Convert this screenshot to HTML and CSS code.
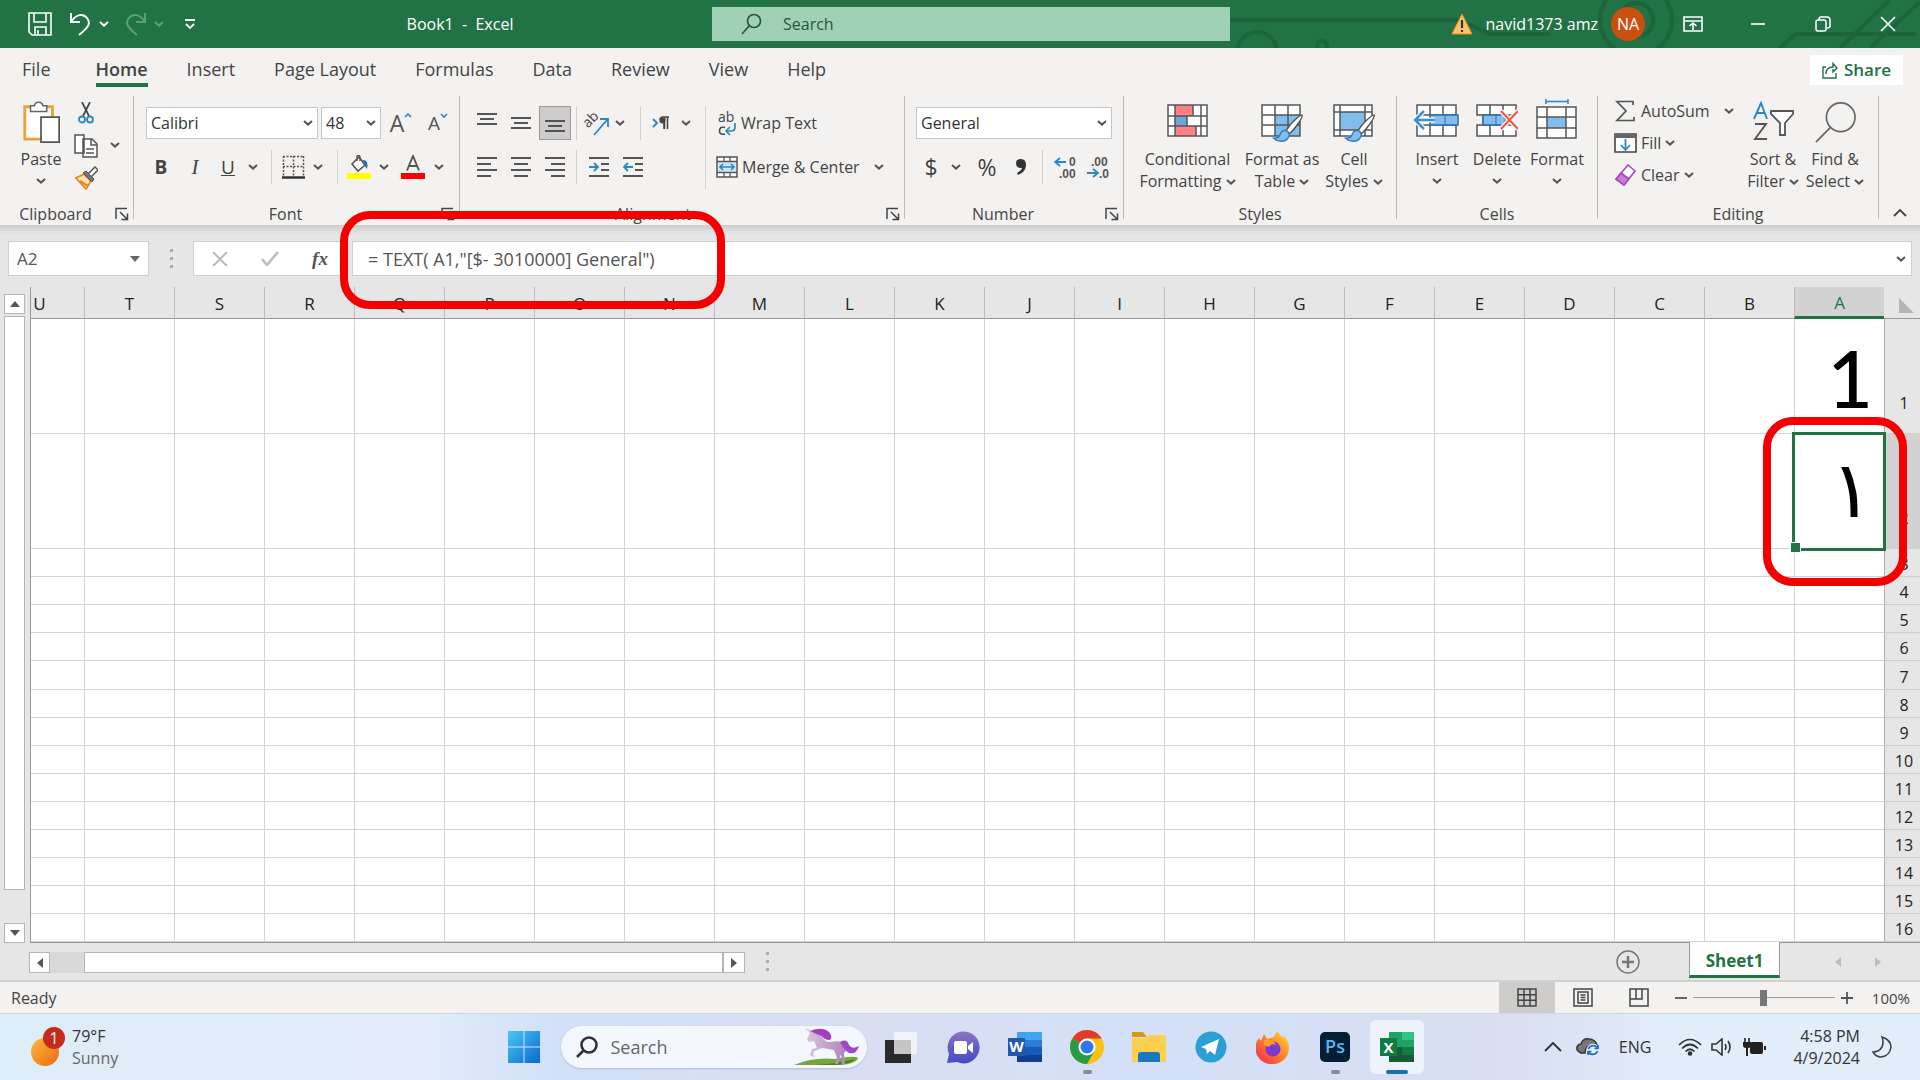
FILE: index.html
```html
<!DOCTYPE html>
<html lang="en">
<head>
<meta charset="utf-8">
<title>Book1 - Excel</title>
<link rel="stylesheet" href="styles.css">
</head>
<body>
<svg class="defs" aria-hidden="true">
  <symbol id="chev" viewBox="0 0 10 6"><path d="M1 1l4 3.6L9 1" fill="none" stroke="currentColor" stroke-width="2"/></symbol>
  <symbol id="launch" viewBox="0 0 14 14"><path d="M1 12V1.500H12M5 5l7 7M12.500 6.500V12.500H6.500" fill="none" stroke="currentColor" stroke-width="1.500"/></symbol>
  <symbol id="brush" viewBox="0 0 36 32"><path d="M35 1C33 0 22 10 17 18l4 4C27 16 36 4 35 1z" fill="#fff" stroke="#555" stroke-width="1.600"/><path d="M16 18c-6 0-5 6-8 8-2 1-3 1-5 1 4 4 12 5 16 0 3-4 1-8-3-9z" fill="#83bdec" stroke="#2a7fc6" stroke-width="1.500"/></symbol>
</svg>

<header class="titlebar">
  <svg class="circuit" viewBox="0 0 700 48" aria-hidden="true"><g fill="none" stroke="#1d653c" stroke-width="4"><path d="M10 20H240l30 14h60"/><circle cx="37" cy="52" r="20"/><circle cx="102" cy="46" r="5"/><circle cx="416" cy="20" r="36"/><circle cx="416" cy="20" r="17"/><path d="M560 48l16-14h120M620 48l50-48M650 48L700 2"/></g></svg>
  <nav class="quick" aria-label="Quick access">
    <button aria-label="Save"><svg width="26" height="26" viewBox="0 0 26 26" fill="none" stroke="#fff" stroke-width="1.600"><path d="M2 2h22v22H5l-3-3zM7 2v9h12V2M8 24v-8h11v8M11 24v-5"/></svg></button>
    <button aria-label="Undo"><svg width="22" height="24" viewBox="0 0 22 24" fill="none" stroke="#fff" stroke-width="2"><path d="M2 1v9h9M2 10C7 2 14 1 18 6s2 9-8 17"/></svg></button>
    <button aria-label="Undo list"><svg class="chev white"><use href="#chev"/></svg></button>
    <button aria-label="Redo" class="dim redo"><svg width="22" height="24" viewBox="0 0 22 24" fill="none" stroke="#fff" stroke-width="2"><path d="M20 1v9h-9M20 10C15 2 8 1 4 6s-2 9 8 17"/></svg></button>
    <button aria-label="Redo list" class="dim"><svg class="chev white"><use href="#chev"/></svg></button>
    <button aria-label="Customize"><svg width="12" height="11" viewBox="0 0 12 11" fill="none" stroke="#fff" stroke-width="1.800"><path d="M1 1h10M2 5l4 4 4-4"/></svg></button>
  </nav>
  <h1 class="doc">Book1&nbsp; -&nbsp; Excel</h1>
  <label class="tsearch"><svg width="21" height="22" viewBox="0 0 21 22" fill="none" stroke="#28563c" stroke-width="1.700"><circle cx="13" cy="8" r="6.500"/><path d="M8.500 12.500L1 21"/></svg><input type="text" aria-label="Search" placeholder="Search"></label>
  <div class="account">
    <svg width="22" height="22" viewBox="0 0 22 22"><path d="M11 1l10 20H1z" fill="#f9c56a" stroke="#e58f20"/><path d="M11 7v8M11 17v2" stroke="#333" stroke-width="2.200"/></svg>
    <span>navid1373 amz</span><span class="avatar">NA</span>
  </div>
  <div class="wincontrols">
    <button aria-label="Ribbon display"><svg width="20" height="16" viewBox="0 0 20 16" fill="none" stroke="#fff" stroke-width="1.600"><path d="M1 1h18v14H1zM1 5h18M10 14V7M6.500 10L10 7l3.500 3"/></svg></button>
    <button aria-label="Minimize"><svg width="16" height="16" viewBox="0 0 16 16"><path d="M1 8h14" stroke="#fff" stroke-width="1.600"/></svg></button>
    <button aria-label="Restore"><svg width="16" height="16" viewBox="0 0 16 16" fill="none" stroke="#fff" stroke-width="1.500"><rect x="1" y="4" width="10" height="11" rx="2"/><path d="M4 4V3q0-2 2-2h6q3 0 3 3v6q0 2-3 2"/></svg></button>
    <button aria-label="Close"><svg width="16" height="16" viewBox="0 0 16 16"><path d="M1 1l14 14M15 1L1 15" stroke="#fff" stroke-width="1.600"/></svg></button>
  </div>
</header>

<nav class="tabs">
  <a href="#" class="file">File</a><a href="#" class="on">Home</a><a href="#">Insert</a><a href="#">Page Layout</a><a href="#">Formulas</a><a href="#">Data</a><a href="#">Review</a><a href="#">View</a><a href="#">Help</a>
  <button class="share"><svg width="16" height="17" viewBox="0 0 16 17" fill="none" stroke="#217346" stroke-width="1.400"><path d="M4 5H1v11h13v-5M4 12c0-5 3-7 7-7V1.500L15 6l-4 4V7"/></svg>Share</button>
</nav>

<section class="ribbon">
  <div class="group">
    <div class="body clip">
      <button class="big"><svg width="40" height="44" viewBox="0 0 40 44"><path d="M3 6h29v34H3z" fill="#fff" stroke="#e8a33d" stroke-width="3"/><path d="M9 11V5h4c1-5 8-5 9 0h4v6z" fill="#fff" stroke="#666" stroke-width="1.600"/><path d="M20 17h19v26H20z" fill="#fff" stroke="#555" stroke-width="1.800"/></svg><span>Paste</span><svg class="chev"><use href="#chev"/></svg></button>
      <div class="stack">
        <button aria-label="Cut"><svg width="16" height="22" viewBox="0 0 16 22" fill="none"><path d="M4 0l7 14M12 0L5 14" stroke="#444" stroke-width="1.700"/><circle cx="4" cy="17.500" r="3" stroke="#2b87c8" stroke-width="1.800"/><circle cx="12" cy="17.500" r="3" stroke="#2b87c8" stroke-width="1.800"/></svg></button>
        <button aria-label="Copy"><svg width="24" height="24" viewBox="0 0 24 24" fill="#fff" stroke="#555" stroke-width="1.500"><path d="M1 1h9v18H1zM9 5h9l5 5v13H9z"/><path d="M17 5v6h6M12 15h8M12 19h8" fill="none"/></svg></button>
        <button aria-label="Format Painter"><svg width="24" height="24" viewBox="0 0 24 24"><path d="M14 8l7-7 3 3-7 7z" fill="#fff" stroke="#555" stroke-width="1.500"/><path d="M2 12l8-4 7 7-5 8z" fill="#fbe3bd" stroke="#e68a1e" stroke-width="1.800"/><path d="M9 7l9 9 2-3-8-8z" fill="#777" stroke="#555"/><path d="M6 15l8 5" stroke="#e68a1e" stroke-width="2.500"/></svg></button>
      </div>
      <button class="copymore" aria-label="Copy options"><svg class="chev"><use href="#chev"/></svg></button>
    </div>
    <div class="label">Clipboard<button aria-label="Clipboard settings"><svg><use href="#launch"/></svg></button></div>
  </div>

  <div class="group">
    <div class="body rows">
      <div class="r fontpick">
        <span class="combo"><select aria-label="Font"><option>Calibri</option></select><svg class="chev"><use href="#chev"/></svg></span>
        <span class="combo"><select aria-label="Font size"><option>48</option></select><svg class="chev"><use href="#chev"/></svg></span>
        <button class="grow">A<svg width="8" height="5" viewBox="0 0 8 5"><path d="M1 4l3-3 3 3" fill="none" stroke="#2b87c8" stroke-width="1.600"/></svg></button>
        <button class="grow small">A<svg width="8" height="5" viewBox="0 0 8 5"><path d="M1 1l3 3 3-3" fill="none" stroke="#2b87c8" stroke-width="1.600"/></svg></button>
      </div>
      <div class="r fontfmt">
        <button><b>B</b></button><button><i>I</i></button><button><u>U</u></button><button aria-label="Underline options"><svg class="chev"><use href="#chev"/></svg></button><hr>
        <button aria-label="Borders"><svg width="23" height="24" viewBox="0 0 23 24" stroke="#555" fill="none"><path d="M1.500 1v20M21.500 1v20M11.500 1v20M1 1.500h21M1 11.500h21" stroke-width="1.500" stroke-dasharray="2 1.500"/><path d="M0 22.500h23" stroke="#333" stroke-width="2.500"/></svg></button><button aria-label="Border options"><svg class="chev"><use href="#chev"/></svg></button><hr>
        <button aria-label="Fill color"><svg width="24" height="24" viewBox="0 0 24 24"><path d="M5 9l7-7 6 8-7 6z" fill="#fff" stroke="#555" stroke-width="1.600"/><path d="M10 6V1q2-2 3 1v4" fill="none" stroke="#555" stroke-width="1.400"/><path d="M16 5q6 0 4 9l-3-4z" fill="#2b6ea5"/><path d="M0 18h24v6H0z" fill="#ff0"/></svg></button><button aria-label="Fill options"><svg class="chev"><use href="#chev"/></svg></button>
        <button aria-label="Font color"><svg width="24" height="24" viewBox="0 0 24 24"><path d="M6 15.500L12 1l6 14.500M8 11h8" fill="none" stroke="#555" stroke-width="1.900"/><path d="M0 18h24v6H0z" fill="#f00"/></svg></button><button aria-label="Font color options"><svg class="chev"><use href="#chev"/></svg></button>
      </div>
    </div>
    <div class="label">Font<button aria-label="Font settings"><svg><use href="#launch"/></svg></button></div>
  </div>

  <div class="group">
    <div class="body align">
      <div class="rows">
        <div class="r al1">
          <button aria-label="Top align"><svg class="ln" viewBox="0 0 20 20"><path d="M0 1h20M3 6h14M0 11h20"/></svg></button><button aria-label="Middle align"><svg class="ln" viewBox="0 0 20 20"><path d="M0 5h20M3 10h14M0 15h20"/></svg></button><button class="pressed" aria-label="Bottom align"><svg class="ln" viewBox="0 0 20 20"><path d="M0 8h20M3 13h14M0 18h20"/></svg></button><hr>
          <button aria-label="Orientation"><svg class="orient" width="24" height="28" viewBox="0 0 24 28"><text class="glyph" x="2" y="19" transform="rotate(-45 3 18)">ab</text><path d="M9 26L22 11M15 10h8v8" fill="none" stroke="#2b87c8" stroke-width="1.800"/></svg></button><button aria-label="Orientation options"><svg class="chev"><use href="#chev"/></svg></button><hr>
          <button aria-label="Text direction"><svg width="18" height="14" viewBox="0 0 18 14"><path d="M1 3l4 4-4 4" fill="none" stroke="#2b87c8" stroke-width="2"/><path d="M17 1h-6q-3 0-3 3t4 3v6M12.500 1v12M15.500 1v12" fill="none" stroke="#444" stroke-width="1.500"/><circle cx="11" cy="4" r="2.500" fill="#444"/></svg></button><button aria-label="Direction options"><svg class="chev"><use href="#chev"/></svg></button>
        </div>
        <div class="r al2">
          <button aria-label="Align left"><svg class="ln" viewBox="0 0 20 20"><path d="M0 1h20M0 7h14M0 13h20M0 19h14"/></svg></button><button aria-label="Center"><svg class="ln" viewBox="0 0 20 20"><path d="M0 1h20M3 7h14M0 13h20M3 19h14"/></svg></button><button aria-label="Align right"><svg class="ln" viewBox="0 0 20 20"><path d="M0 1h20M6 7h14M0 13h20M6 19h14"/></svg></button><hr>
          <button aria-label="Increase indent"><svg class="ln" viewBox="0 0 20 20"><path d="M0 1h20M12 7h8M12 13h8M0 19h20"/><path class="bl" d="M0 10h9M5 6l4 4-4 4"/></svg></button><button aria-label="Decrease indent"><svg class="ln" viewBox="0 0 20 20"><path d="M0 1h20M12 7h8M12 13h8M0 19h20"/><path class="bl" d="M1 10h9M5 6l-4 4 4 4"/></svg></button>
        </div>
      </div>
      <div class="rows wrapcol">
        <button class="r txt"><svg width="20" height="28" viewBox="0 0 20 28"><text class="glyph" x="1" y="13">ab</text><path d="M8 18.500q-5-1.500-5.500 3t5.500 3.500" fill="none" stroke="#444" stroke-width="1.500"/><path d="M18 14v4q0 4-4 4H9M13 18l-4 4 4 4" fill="none" stroke="#2b87c8" stroke-width="1.700"/></svg>Wrap Text</button>
        <button class="r txt"><svg width="22" height="22" viewBox="0 0 22 22"><path d="M1 1h20v20H1z" fill="#fff" stroke="#555" stroke-width="1.500"/><path d="M2 6h18v10H2z" fill="#cde6f7"/><path d="M1 5.500h20M1 16.500h20M8 1v4M14 1v4M8 17v4M14 17v4" stroke="#555" stroke-width="1.300"/><path d="M4 11h14M7 8l-3 3 3 3M15 8l3 3-3 3" fill="none" stroke="#2b87c8" stroke-width="1.700"/></svg>Merge &amp; Center<svg class="chev"><use href="#chev"/></svg></button>
      </div>
    </div>
    <div class="label mid">Alignment<button aria-label="Alignment settings"><svg><use href="#launch"/></svg></button></div>
  </div>

  <div class="group">
    <div class="body rows">
      <div class="r numpick"><span class="combo"><select aria-label="Number format"><option>General</option></select><svg class="chev"><use href="#chev"/></svg></span></div>
      <div class="r numfmt">
        <button class="sym">$</button><button aria-label="Currency options"><svg class="chev"><use href="#chev"/></svg></button><button class="sym">%</button>
        <button aria-label="Comma style"><svg width="12" height="18" viewBox="0 0 12 18"><path d="M1 5q0-4 5-4 5 0 5 6 0 7-8 10l-1-2q5-3 5-5H6Q1 10 1 5z" fill="#333"/></svg></button><hr>
        <button aria-label="Increase decimal"><svg width="23" height="24" viewBox="0 0 23 24"><path d="M1 7h11M6 3L1 7l5 4" fill="none" stroke="#2b87c8" stroke-width="1.800"/><text class="dec" x="15" y="11">0</text><text class="dec" x="5" y="23">.00</text></svg></button><button aria-label="Decrease decimal"><svg width="23" height="24" viewBox="0 0 23 24"><path d="M0 18h11M6 14l5 4-5 4" fill="none" stroke="#2b87c8" stroke-width="1.800"/><text class="dec" x="4" y="11">.00</text><text class="dec" x="12" y="23">.0</text></svg></button>
      </div>
    </div>
    <div class="label">Number<button aria-label="Number settings"><svg><use href="#launch"/></svg></button></div>
  </div>

  <div class="group">
    <div class="body bigs styles">
      <button class="big"><svg width="42" height="40" viewBox="0 0 42 40"><path d="M1 3h39v31H1z" fill="#fff"/><path d="M8 3h18v11H8zM8 24h21v10H8z" fill="#ff8087"/><path d="M8 14h12v10H8z" fill="#6ba7dc"/><path d="M1 3h39v31H1zM1 14h39M1 24h39M8 3v31M26 3v11M20 14v10M29 24v10M34 3v31" fill="none" stroke="#555" stroke-width="1.500"/></svg><span>Conditional<br>Formatting <svg class="chev"><use href="#chev"/></svg></span></button>
      <button class="big"><svg width="42" height="40" viewBox="0 0 42 40"><path d="M1 3h38v31H1z" fill="#fff"/><path d="M14 13h25v21H14z" fill="#83bdec"/><path d="M1 3h38v31H1zM1 13h38M1 23h38M14 3v31M27 3v31" fill="none" stroke="#555" stroke-width="1.500"/><use href="#brush" x="10" y="12" width="32" height="29"/></svg><span>Format as<br>Table <svg class="chev"><use href="#chev"/></svg></span></button>
      <button class="big"><svg width="42" height="40" viewBox="0 0 42 40"><path d="M1 3h38v31H1z" fill="#fff"/><path d="M7 10h25v18H7z" fill="#83bdec"/><path d="M1 3h38v31H1zM1 10h38M1 28h38M7 3v31M32 3v31" fill="none" stroke="#555" stroke-width="1.500"/><use href="#brush" x="10" y="12" width="32" height="29"/></svg><span>Cell<br>Styles <svg class="chev"><use href="#chev"/></svg></span></button>
    </div>
    <div class="label">Styles</div>
  </div>

  <div class="group">
    <div class="body bigs cells">
      <button class="big"><svg width="46" height="40" viewBox="0 0 46 40"><path d="M3 3h39v31H3z" fill="#fff"/><path d="M3 3h39v31H3zM3 13h39M3 23h39M16 3v31M29 3v31" fill="none" stroke="#555" stroke-width="1.500"/><path d="M16 13h28v10H16z" fill="#83bdec" stroke="#2a6fb0" stroke-width="1.500"/><path d="M31 13v10" stroke="#2a6fb0"/><path d="M1 18h20M10 9l-9 9 9 9" fill="none" stroke="#fff" stroke-width="5"/><path d="M1 18h20M10 9l-9 9 9 9" fill="none" stroke="#3a8fd8" stroke-width="2.500"/></svg><span>Insert</span><svg class="chev"><use href="#chev"/></svg></button>
      <button class="big"><svg width="42" height="40" viewBox="0 0 42 40"><path d="M1 3h39v10H1zM1 23h39v11H1z" fill="#fff" stroke="#555" stroke-width="1.500"/><path d="M14 3v10M27 3v10M14 23v11M27 23v11M7 13v10" stroke="#555" stroke-width="1.500"/><path d="M7 13h20l3 5-3 5H7z" fill="#83bdec" stroke="#2a6fb0" stroke-width="1.500"/><path d="M20 13v10" stroke="#2a6fb0"/><path d="M25 9l17 18M42 9L25 27" stroke="#f3f2f1" stroke-width="5"/><path d="M25 9l17 18M42 9L25 27" stroke="#ef5350" stroke-width="2"/></svg><span>Delete</span><svg class="chev"><use href="#chev"/></svg></button>
      <button class="big"><svg width="42" height="46" viewBox="0 0 42 46"><path d="M1 9h39v31H1z" fill="#fff"/><path d="M11 19h19v11H11z" fill="#83bdec"/><path d="M1 9h39v31H1zM1 19h39M1 30h39M11 9v31M30 9v31" fill="none" stroke="#555" stroke-width="1.500"/><path d="M10 3.500h22M10 1v5M32 1v5" stroke="#2b87c8" stroke-width="1.500"/></svg><span>Format</span><svg class="chev"><use href="#chev"/></svg></button>
    </div>
    <div class="label">Cells</div>
  </div>

  <div class="group">
    <div class="body editing">
      <div class="elist">
        <button class="txt"><svg width="23" height="22" viewBox="0 0 23 22"><path d="M19 5V1.500H3L12 11 3 20.500h17V17" fill="none" stroke="#555" stroke-width="1.700"/></svg>AutoSum<svg class="chev far"><use href="#chev"/></svg></button>
        <button class="txt"><svg width="23" height="20" viewBox="0 0 23 20"><path d="M1 1h21v18H1z" fill="#fff" stroke="#444" stroke-width="1.600"/><path d="M1 3h21" stroke="#666" stroke-width="4"/><path d="M11.500 6v11M7 12l4.500 5 4.500-5" fill="none" stroke="#2b87c8" stroke-width="1.800"/></svg>Fill<svg class="chev"><use href="#chev"/></svg></button>
        <button class="txt"><svg width="23" height="22" viewBox="0 0 23 22"><path d="M14 1l7 6-11 14-8-6z" fill="#fff" stroke="#a24bbd" stroke-width="1.600"/><path d="M7 9l8 6-5 6-8-6z" fill="#c77ddb" stroke="#a24bbd" stroke-width="1.600"/></svg>Clear<svg class="chev"><use href="#chev"/></svg></button>
      </div>
      <button class="big"><svg width="42" height="40" viewBox="0 0 42 40" fill="none"><path d="M2 17L9 1l6 16M5 11h8" stroke="#2b87c8" stroke-width="1.900"/><path d="M3 22h11L3 37h12" stroke="#555" stroke-width="1.900"/><path d="M19 9h22v3l-8 9v12h-5V21l-9-9z" fill="#fff" stroke="#555" stroke-width="1.800"/></svg><span>Sort &amp;<br>Filter <svg class="chev"><use href="#chev"/></svg></span></button>
      <button class="big"><svg width="44" height="44" viewBox="0 0 44 44" fill="none" stroke="#666" stroke-width="1.800"><circle cx="28" cy="17" r="15"/><path d="M17 28L2 43"/></svg><span>Find &amp;<br>Select <svg class="chev"><use href="#chev"/></svg></span></button>
    </div>
    <div class="label">Editing</div>
  </div>
  <button class="collapse" aria-label="Collapse ribbon"><svg width="14" height="9" viewBox="0 0 14 9"><path d="M1 8l6-6 6 6" fill="none" stroke="#444" stroke-width="1.800"/></svg></button>
</section>

<section class="fbar">
  <label class="namebox"><input type="text" value="A2" aria-label="Name box"><svg width="10" height="6" viewBox="0 0 10 6"><path d="M0 0h10L5 6z" fill="#666"/></svg></label>
  <span class="dots"><i></i><i></i><i></i></span>
  <div class="fbtns">
    <button aria-label="Cancel"><svg width="16" height="14" viewBox="0 0 16 14"><path d="M1 0l14 14M15 0L1 14" stroke="#bbb" stroke-width="2"/></svg></button>
    <button aria-label="Enter"><svg width="18" height="15" viewBox="0 0 18 15"><path d="M1 8l5 6L17 1" fill="none" stroke="#bbb" stroke-width="2.500"/></svg></button>
    <button class="fx"><i>fx</i></button>
  </div>
  <label class="formula"><input type="text" aria-label="Formula" value="= TEXT( A1,&quot;[$- 3010000] General&quot;)"><svg class="chev"><use href="#chev"/></svg></label>
</section>

<main class="sheet">
  <div class="vscroll">
    <button aria-label="Scroll up"><svg width="10" height="6" viewBox="0 0 10 6"><path d="M0 6h10L5 0z" fill="#555"/></svg></button>
    <div class="thumb"></div>
    <button aria-label="Scroll down"><svg width="10" height="6" viewBox="0 0 10 6"><path d="M0 0h10L5 6z" fill="#555"/></svg></button>
  </div>
  <div class="gridwrap" dir="rtl"><table id="grid"></table></div>
</main>

<footer class="sheetbar">
  <div class="hscroll">
    <button aria-label="Scroll left"><svg width="6" height="10" viewBox="0 0 6 10"><path d="M6 0v10L0 5z" fill="#555"/></svg></button>
    <div class="thumb"></div>
    <button aria-label="Scroll right"><svg width="6" height="10" viewBox="0 0 6 10"><path d="M0 0v10l6-5z" fill="#555"/></svg></button>
  </div>
  <span class="dots"><i></i><i></i><i></i></span>
  <button class="add" aria-label="New sheet"><svg width="24" height="24" viewBox="0 0 24 24" fill="none" stroke="#777"><circle cx="12" cy="12" r="11" stroke-width="1.500"/><path d="M12 6v12M6 12h12" stroke-width="2.500"/></svg></button>
  <a class="stab" href="#">Sheet1</a>
  <div class="snav"><svg width="6" height="10" viewBox="0 0 6 10"><path d="M6 0v10L0 5z"/></svg><svg width="6" height="10" viewBox="0 0 6 10"><path d="M0 0v10l6-5z"/></svg></div>
</footer>

<div class="status">
  <span>Ready</span>
  <div class="views">
    <button class="pressed" aria-label="Normal"><svg width="20" height="19" viewBox="0 0 20 19"><path d="M1 1h18v17H1zM1 6.700h18M1 12.300h18M7 1v17M13 1v17"/></svg></button>
    <button aria-label="Page layout"><svg width="20" height="19" viewBox="0 0 20 19"><path d="M1 1h18v17H1zM5 4h10v11H5zM7.500 7h5M7.500 9.500h5M7.500 12h5"/></svg></button>
    <button aria-label="Page break"><svg width="20" height="19" viewBox="0 0 20 19"><path d="M1 1h18v17H1zM1 11h12V1M7 1v10"/></svg></button>
  </div>
  <div class="zoom">
    <button aria-label="Zoom out"><svg width="12" height="12" viewBox="0 0 12 12"><path d="M0 6h12"/></svg></button>
    <input type="range" aria-label="Zoom" min="0" max="100" value="50">
    <button aria-label="Zoom in"><svg width="12" height="12" viewBox="0 0 12 12"><path d="M0 6h12M6 0v12"/></svg></button>
    <span>100%</span>
  </div>
</div>

<div class="taskbar">
  <div class="weather">
    <svg width="36" height="42" viewBox="0 0 36 42"><defs><linearGradient id="sun" x1="0" y1="0" x2="1" y2="1"><stop offset="0" stop-color="#fdb73e"/><stop offset="1" stop-color="#ee6a10"/></linearGradient></defs><circle cx="16" cy="26" r="14" fill="url(#sun)"/><circle cx="25" cy="12" r="11" fill="#c42b1c"/><text x="25" y="18" class="badge">1</text></svg>
    <p>79°F<br><span>Sunny</span></p>
  </div>
  <div class="apps">
    <button aria-label="Start"><svg width="34" height="34" viewBox="0 0 34 34"><defs><linearGradient id="win" x1="0" y1="0" x2="1" y2="1"><stop offset="0" stop-color="#4cc8f5"/><stop offset="1" stop-color="#0868cc"/></linearGradient></defs><path d="M1 1h15.500v15.500H1zM17.500 1H33v15.500H17.500zM1 17.500h15.500V33H1zM17.500 17.500H33V33H17.500z" fill="url(#win)"/></svg></button>
    <label class="wsearch"><svg width="22" height="22" viewBox="0 0 22 22" fill="none" stroke="#333" stroke-width="2.600"><circle cx="13" cy="9" r="7.500"/><path d="M8 14l-7 7"/></svg><input type="text" aria-label="Search Windows" placeholder="Search">
      <svg class="unicorn" width="70" height="40" viewBox="0 0 70 40"><defs><linearGradient id="uni" x1="0" y1="0" x2="1" y2="0"><stop offset="0" stop-color="#dcc3dc"/><stop offset="1" stop-color="#b184bb"/></linearGradient></defs><path d="M1 38q20-8 40-6 22-4 24-1-2 8-30 7z" fill="#75a83a"/><path d="M20 38q24-1 42-6-5 6-27 6z" fill="#4f7b28"/><path d="M12 1l5 5-3 6 2 3 5-1 3 7-5 1-2 6 4 2 1-1-2-1 1-4 8-3 12 2 3 8-2 6h3l3-10 1 10h3l-1-11q4-3 2-9-6-4-16-2-6 0-8-6-4-5-10-5z" fill="url(#uni)"/><path d="M17 4q12-5 19 1 4 5 1 8-6 0-8-4-6-2-12-5z" fill="#a43fc4"/><path d="M47 15q7-4 9 3 3 5 10 1-3 9-10 7-5-3-9-11z" fill="#a04ac2"/></svg></label>
    <button aria-label="Task view"><svg width="34" height="34" viewBox="0 0 34 34"><path d="M1 10h26v23H1z" fill="#2a2a2a"/><path d="M10 2h23v22H10z" fill="#fafafa" opacity=".75"/></svg></button>
    <button aria-label="Chat"><svg width="34" height="34" viewBox="0 0 34 34"><defs><linearGradient id="chat" x1="0" y1="0" x2="0" y2="1"><stop offset="0" stop-color="#8a76c0"/><stop offset="1" stop-color="#4548c8"/></linearGradient></defs><path d="M1 33l2-9A16 16 0 1 1 11 32z" fill="url(#chat)"/><rect x="8" y="11" width="13" height="13" rx="2" fill="#fff"/><path d="M22 16l5-4v11l-5-4z" fill="#fff"/></svg></button>
    <button aria-label="Word"><svg width="34" height="32" viewBox="0 0 34 32"><path d="M9 1h25v8H9z" fill="#41a5ee"/><path d="M9 9h25v7H9z" fill="#2b7cd3"/><path d="M9 16h25v8H9z" fill="#185abd"/><path d="M9 24h25v7H9z" fill="#103f91"/><path d="M0 7h17v18H0z" fill="#1d59ae"/><text x="8.500" y="21" class="app">W</text></svg></button>
    <button class="run" aria-label="Chrome"><svg width="34" height="34" viewBox="0 0 34 34"><circle cx="17" cy="17" r="17" fill="#fbc116"/><path d="M17 17L2.300 8.500A17 17 0 0 1 31.700 8.500H17z" fill="#df3b2f"/><path d="M17 17L2.300 8.500A17 17 0 0 0 17 34l7-12z" fill="#2a9a46"/><circle cx="17" cy="17" r="8.500" fill="#fff"/><circle cx="17" cy="17" r="6.500" fill="#2f77e8"/></svg></button>
    <button aria-label="Files"><svg width="36" height="32" viewBox="0 0 36 32"><path d="M1 1h11l4 5H1z" fill="#d99a10"/><path d="M1 7h14l3-3h17v27H1z" fill="#fbd04f"/><path d="M7 31v-7q0-3 3-3h16q3 0 3 3v7z" fill="#1977c4"/></svg></button>
    <button aria-label="Telegram"><svg width="32" height="32" viewBox="0 0 32 32"><circle cx="16" cy="16" r="15.500" fill="#2d9fd5"/><path d="M6 16l18-8-4 16-5-4-3 3-1-5z" fill="#fff"/></svg></button>
    <button aria-label="Firefox"><svg width="34" height="34" viewBox="0 0 34 34"><defs><linearGradient id="ff" x1="1" y1="0" x2="0" y2="1"><stop offset="0" stop-color="#ffe43a"/><stop offset=".5" stop-color="#ff7a2a"/><stop offset="1" stop-color="#ee2558"/></linearGradient></defs><path d="M17 34A16 16 0 0 1 3 8l2 3 3-7 3 5 7-2 3-6q3 4 6 7l1-2q5 5 5 12A16 16 0 0 1 17 34z" fill="url(#ff)"/><circle cx="17" cy="19" r="7.500" fill="#7a3ad0"/><path d="M8 10q8-3 12 5-5-2-7 2l-5-2z" fill="#ff9a25"/></svg></button>
    <button class="run" aria-label="Photoshop"><svg width="32" height="32" viewBox="0 0 32 32"><rect x="1" y="1" width="30" height="30" rx="5" fill="#041e36"/><text x="16" y="22" class="app ps">Ps</text></svg></button>
    <button class="run active" aria-label="Excel"><svg width="34" height="32" viewBox="0 0 34 32"><path d="M9 1h13v15H9z" fill="#21a366"/><path d="M22 1h12v8H22z" fill="#33c481"/><path d="M22 9h12v7H22z" fill="#21a366"/><path d="M9 16h25v15H9z" fill="#185c37"/><path d="M22 16h12v8H22z" fill="#107c41"/><path d="M0 7h17v18H0z" fill="#107c41"/><text x="8.500" y="22" class="app">X</text></svg></button>
  </div>
  <div class="tray">
    <svg class="more" width="18" height="10" viewBox="0 0 18 10"><path d="M1 9l8-8 8 8" fill="none" stroke="#333" stroke-width="1.900"/></svg>
    <svg width="24" height="20" viewBox="0 0 24 20"><path d="M5 16Q0 14 1 10q1-3 4-3 2-6 8-5 6 0 8 6-4-2-8 1-4 2-4 7z" fill="#777" stroke="#333" stroke-width="1.500"/><circle cx="17" cy="13" r="6.500" fill="#e6effa"/><path d="M12.500 12a5 5 0 0 1 9-1M21.500 14a5 5 0 0 1-9 1M22 8v3.500h-3.500M12 18v-3.500h3.500" fill="none" stroke="#1c6cc8" stroke-width="1.700"/></svg>
    <span class="lang">ENG</span>
    <svg width="24" height="18" viewBox="0 0 24 18" fill="none" stroke="#333" stroke-width="1.700"><path d="M1 7q11-11 22 0M4 10.500q8-8 16 0M7.500 13.500q4.500-4.500 9 0"/><circle cx="12" cy="15.500" r="1.500" fill="#333"/></svg>
    <svg width="22" height="18" viewBox="0 0 22 18" fill="none" stroke="#333" stroke-width="1.600"><path d="M1 6h4l6-5v16l-6-5H1zM14 6q2 3 0 6M17 3q4 6 0 12"/></svg>
    <svg width="24" height="18" viewBox="0 0 24 18"><path d="M3 0v4M7 0v4" stroke="#222" stroke-width="1.600"/><path d="M1 4h8v3q0 3-3 3v8H4v-8Q1 10 1 7z" fill="#222"/><rect x="8" y="4" width="13" height="12" rx="2" fill="#222"/><path d="M22 8h2v4h-2z" fill="#222"/></svg>
    <p class="clock">4:58 PM<br>4/9/2024</p>
    <svg class="moon" width="20" height="22" viewBox="0 0 20 22"><path d="M10 1q9 3 9 10-1 9-10 10-5 0-8-5 6 0 9-5 2-5 0-10z" fill="none" stroke="#444" stroke-width="1.600"/></svg>
  </div>
</div>

<div class="mark mark-formula"></div>
<div class="mark mark-cell"></div>
<script src="grid.js"></script>
</body>
</html>
```
FILE: styles.css
```css
* { box-sizing: border-box; }
body { margin: 0; min-height: 100vh; display: flex; flex-direction: column; position: relative; overflow-x: hidden; font: 16px/20px "Open Sans", "Noto Sans", sans-serif; color: #444; background: #e6e6e6; }
button, input, select { font: inherit; color: inherit; border: 0; background: none; padding: 0; margin: 0; outline: 0; }
button { display: flex; align-items: center; justify-content: center; }
a { color: inherit; text-decoration: none; }
p { margin: 0; }
svg { flex: none; }
.defs { position: absolute; width: 0; height: 0; }
.chev { width: 10px; height: 6px; color: #555; }
.white { color: #fff; }
.dim { opacity: .3; }

.titlebar { position: relative; height: 48px; background: #217346; color: #fff; display: grid; grid-template-columns: 350fr 220fr 142fr 518fr 200fr 230fr 260fr; align-items: center; }
.circuit { position: absolute; right: 0; top: 0; width: 700px; height: 48px; }
.quick { display: grid; grid-template-columns: 40px 40px 8px 44px 14px 48px; align-items: center; padding-left: 20px; }
.redo { padding-left: 12px; }
.doc { margin: 0; font-size: 16px; font-weight: 400; text-align: center; white-space: nowrap; }
.tsearch { grid-column: 4; height: 34px; background: #a0d0b6; display: flex; align-items: center; padding-left: 29px; gap: 21px; position: relative; }
.tsearch input { width: 300px; color: #28563c; }
.tsearch input::placeholder { color: #28563c; opacity: 1; }
.account { grid-column: 6; display: flex; align-items: center; gap: 13px; justify-content: flex-end; position: relative; padding-right: 15px; white-space: nowrap; }
.avatar { width: 34px; height: 34px; border-radius: 50%; background: #ca5010; text-align: center; line-height: 34px; }
.wincontrols { position: relative; display: grid; grid-template-columns: repeat(4, 1fr); }

.tabs { height: 44px; background: #f3f2f1; display: flex; align-items: center; gap: 39px; padding: 0 17px 0 22px; font-size: 18px; }
.tabs a { height: 32px; line-height: 28px; border-bottom: 4px solid transparent; margin-top: 2px; white-space: nowrap; }
.tabs .file { padding-right: 6px; }
.tabs .on { font-weight: 600; border-color: #217346; }
.share { margin-left: auto; width: 93px; height: 30px; background: #fff; color: #217346; font-weight: 600; font-size: 17px; gap: 6px; }

.ribbon { height: 133px; background: #f3f2f1; padding: 4px 0 6px; display: grid; grid-template-columns: 134fr 326fr 445fr 219fr 273fr 201fr 281fr 41fr; }
.group { border-right: 1px solid #bdbdbd; display: grid; grid-template-rows: 109px 14px; min-width: 0; }
.label { position: relative; text-align: center; line-height: 18px; padding-right: 22px; }
.label:not(:has(button)) { padding-right: 0; }
.label.mid { padding-right: 58px; }
.label button { position: absolute; right: 4px; top: 2px; }
.label svg { width: 14px; height: 14px; }
hr { border: 0; width: 1px; height: 34px; background: #d2d0ce; margin: 0; justify-self: center; }
.rows { display: grid; grid-template-rows: 34px 34px; row-gap: 10px; padding-top: 10px; }
.r { display: grid; align-items: center; }
.r button { height: 32px; }

.big { flex-direction: column; justify-content: flex-start; padding-top: 5px; line-height: 22px; white-space: nowrap; }
.big > svg:first-child { height: 42px; margin-bottom: 5px; }
.big > .chev { margin-top: 8px; }
.big span .chev { vertical-align: 2px; }
.clip { display: grid; grid-template-columns: 50px 30px 18px; column-gap: 5px; padding-left: 16px; }
.stack { display: grid; grid-template-rows: 33px 33px 32px; align-content: start; }
.copymore { height: 98px; }

.fontpick { grid-template-columns: 172px 60px 34px 34px; column-gap: 3px; padding-left: 12px; }
.combo { display: grid; height: 32px; border: 1px solid #c8c6c4; background: #fff; align-items: center; color: #333; }
.combo > * { grid-area: 1 / 1; }
.combo select { appearance: none; height: 30px; width: 100%; padding-left: 4px; }
.combo .chev { justify-self: end; margin-right: 4px; pointer-events: none; }
.grow { font-size: 23px; align-items: center; color: #555; }
.grow svg { margin-bottom: 16px; }
.small { font-size: 19px; }
.fontfmt { grid-template-columns: 34px 34px 32px 18px 18px 26px 24px 14px 30px 20px 38px 14px; padding-left: 10px; font-size: 19px; }
.fontfmt i { font-family: "Liberation Serif", serif; font-size: 21px; }
.align { display: grid; grid-template-columns: 245px 1fr; }
.al1 { grid-template-columns: 34px 34px 34px 8px 34px 12px 28px 14px 36px; padding-left: 10px; }
.al2 { grid-template-columns: 34px 34px 34px 8px 38px 30px; padding-left: 10px; }
.pressed { background: #cfcdcb; }
.al1 .pressed { border: 1px solid #999; margin: 0 1px; height: 34px; }
.ln { width: 20px; height: 20px; stroke: #555; stroke-width: 1.8; fill: none; overflow: visible; }
.ln .bl { stroke: #2b87c8; }
.orient { overflow: visible; }
.glyph { font: 14px "Open Sans", sans-serif; fill: #444; }
.wrapcol { border-left: 1px solid #d2d0ce; margin: 10px 0 16px; padding: 0 0 0 10px; align-content: start; }
.txt { display: flex; justify-content: flex-start; gap: 4px; white-space: nowrap; }
.wrapcol .txt:first-child { padding-left: 1px; }
.wrapcol .chev { margin-left: 10px; }
.numpick { padding: 0 11px; }
.numfmt { grid-template-columns: 32px 18px 44px 24px 18px 28px 38px; padding-left: 10px; }
.sym { font-size: 23px; }
.dec { font: 600 12px "Liberation Sans", sans-serif; fill: #555; }
.bigs { display: grid; }
.styles { grid-template-columns: 117px 72px 72px; padding-left: 5px; }
.cells { grid-template-columns: 60px 60px 60px; padding-left: 10px; }
.cells .big:last-child > svg:first-child { height: 46px; margin: -3px 0 4px; }
.editing { display: grid; grid-template-columns: 140px 62px 62px; padding-left: 4px; }
.elist { display: grid; grid-template-rows: 32px 32px 32px; padding: 0 0 0 12px; align-content: start; margin-top: -1px; }
.far { margin-left: 10px; }
.collapse { align-self: end; height: 14px; }

.fbar { height: 62px; padding: 16px 8px 11px; display: flex; background: linear-gradient(#cdcdcd, #e6e6e6 9px); color: #555; font-size: 17px; }
.namebox { width: 141px; border: 1px solid #cfcfcf; background: #fff; display: flex; align-items: center; padding: 0 8px; height: 35px; }
.namebox input { width: 100%; min-width: 0; }
.dots { width: 44px; display: flex; flex-direction: column; gap: 5px; align-items: center; justify-content: center; }
.dots i { width: 3px; height: 3px; background: #aaa; }
.fbtns { width: 153px; border: 1px solid #cfcfcf; background: #fff; display: grid; grid-template-columns: 51px 50px 50px; }
.fx { font: bold 19px "Liberation Serif", serif; }
.formula { flex: 1; margin-left: 6px; border: 1px solid #cfcfcf; background: #fff; display: flex; align-items: center; padding: 0 5px 0 15px; font-size: 18px; }
.formula input { flex: 1; }

.sheet { flex: 1; display: flex; min-height: 0; }
.vscroll { width: 30px; padding: 7px 5px 0 4px; display: grid; grid-template-rows: 20px 1fr 20px; row-gap: 2px; }
.vscroll button, .hscroll button { background: #fff; border: 1px solid #b5b5b5; }
.vscroll .thumb { background: #fff; border: 1px solid #b5b5b5; margin-bottom: 31px; }
.gridwrap { flex: 1; min-width: 0; overflow: hidden; background: #fff; border-left: 1px solid #999; border-bottom: 1px solid #999; }
#grid { border-collapse: separate; border-spacing: 0; table-layout: fixed; width: 1926px; height: 100%; color: #222; }
#grid th { font-weight: 400; padding: 0; background: #e6e6e6; font-size: 17px; }
#grid thead tr { height: 32px; }
#grid thead th { border-bottom: 1px solid #999; border-left: 1px solid #bdbdbd; width: 90px; padding-top: 3px; }
#grid thead th:first-child { width: 36px; border-left: 0; }
#grid thead th.sel { background: #d2d2d2; color: #217346; border-bottom: 3px solid #217346; }
#grid thead svg { display: block; margin: 2px 6px 0 0; }
#grid tbody tr { height: 28px; }
#grid tbody tr.tall { height: 115px; }
#grid tbody th { font-size: 16px; border-bottom: 1px solid #d0d0d0; border-left: 1px solid #b0b0b0; vertical-align: bottom; line-height: 24px; padding: 0 0 0 3px; }
#grid tbody .tall th { line-height: 26px; padding-bottom: 17px; }
#grid tbody th.sel { background: #d2d2d2; }
#grid td { border-bottom: 1px solid #d4d4d4; border-left: 1px solid #d4d4d4; padding: 0; }
#grid .num { direction: ltr; text-align: right; padding: 0 10px 5px 0; font: 500 79px/100px Lato, sans-serif; color: #000; vertical-align: bottom; }
#grid .num.active { position: relative; outline: 3px solid #217346; outline-offset: -1px; padding-bottom: 8px; font: 79px/100px "DejaVu Sans", sans-serif; }
#grid .active::after { content: ""; position: absolute; left: -4px; bottom: -5px; width: 9px; height: 9px; background: #217346; border: 1px solid #fff; }

.sheetbar { height: 39px; display: flex; border-bottom: 2px solid #d0d0d0; padding-left: 29px; }
.hscroll { width: 716px; height: 21px; margin-top: 9px; background: #d9d9d9; display: grid; grid-template-columns: 21px 1fr 22px; }
.hscroll .thumb { background: #fff; border: 1px solid #b5b5b5; margin-left: 34px; }
.add { margin-left: auto; margin-right: 49px; }
.stab { width: 91px; height: 36px; background: #fff; border: 1px solid #999; border-width: 0 1px 3px; border-bottom-color: #217346; color: #217346; font-weight: 700; font-size: 17px; line-height: 38px; text-align: center; margin-top: -1px; position: relative; }
.snav { width: 140px; display: flex; align-items: center; gap: 34px; padding-left: 55px; fill: #bdbdbd; }
.status { height: 31px; background: #f3f2f1; display: flex; align-items: center; padding: 0 10px 0 11px; }
.views { margin-left: auto; display: grid; grid-template-columns: 56px 56px 56px; height: 31px; }
.views svg { fill: none; stroke: #444; stroke-width: 1.5; }
.zoom { display: flex; align-items: center; margin-left: 8px; font-size: 15px; }
.zoom button { width: 12px; }
.zoom svg { stroke: #555; stroke-width: 1.8; }
.zoom input { appearance: none; width: 142px; height: 16px; margin: 0 6px; background: linear-gradient(#999, #999) center / 100% 1px no-repeat; }
.zoom input::-webkit-slider-thumb { appearance: none; width: 7px; height: 16px; background: #777; }
.zoom span { margin-left: 19px; }

.taskbar { height: 67px; background: linear-gradient(90deg, #dfedf8, #e2ecf9 22%, #d2e0f8 29%, #d9def2 45%, #d3e0f8 60%, #d9def1 78%, #e2eefa 88%); display: grid; grid-template-columns: 1fr auto 1fr; align-items: center; color: #333; border-top: 1px solid #cfd8e6; padding-bottom: 1px; }
.weather { display: flex; align-items: center; gap: 7px; padding-left: 29px; line-height: 22px; }
.weather span { color: #666; }
.badge { font: 16px "Open Sans", sans-serif; fill: #fff; text-anchor: middle; }
.apps { display: flex; align-items: center; }
.apps button { position: relative; width: 54px; height: 54px; margin-right: 8px; border-radius: 6px; }
.apps button:first-child { margin-right: 10px; }
.wsearch { width: 306px; height: 42px; margin-right: 7px; border-radius: 21px; background: #f4f8fe; box-shadow: 0 1px 2px #aebbd0; display: flex; align-items: center; padding: 0 4px 0 15px; gap: 13px; }
.wsearch input { flex: 1; min-width: 0; font-size: 18px; }
.wsearch input::placeholder { color: #666; opacity: 1; }
.app { font: 700 15px "Open Sans", sans-serif; fill: #fff; text-anchor: middle; }
.ps { font-size: 18px; fill: #5bb4f5; font-weight: 600; }
.run::after { content: ""; position: absolute; bottom: 0; left: 23px; width: 9px; height: 4px; border-radius: 2px; background: #858a96; }
.active.run::after { left: 16px; width: 22px; background: #1a70b8; }
.apps .active { background: #eef2fb; margin-right: 0; }
.tray { display: flex; align-items: center; justify-content: flex-end; gap: 9px; padding-right: 28px; }
.more { margin-right: 5px; }
.lang { margin: 0 18px 0 10px; }
.clock { text-align: right; line-height: 22px; margin: 0 3px 0 18px; }

.mark { position: absolute; border: 8px solid #f40000; border-radius: 30px; pointer-events: none; }
.mark-formula { left: 340px; top: 211px; width: 385px; height: 98px; }
.mark-cell { right: 13px; top: 417px; width: 144px; height: 169px; }
```
FILE: grid.js
```js
const columns = "ABCDEFGHIJKLMNOPQRSTU".split("");
const values = { A1: "1", A2: "\u06F1" };
const active = { col: "A", row: 2 };
const corner = '<th aria-label="Select all"><svg width="15" height="15" viewBox="0 0 15 15"><path d="M0 0v15h15z" fill="#b5b5b5"/></svg></th>';

let html = "<thead><tr>" + corner;
for (const c of columns) html += `<th${c === active.col ? ' class="sel"' : ""}>${c}</th>`;
html += "</tr></thead><tbody>";
for (let r = 1; r <= 16; r++) {
  html += `<tr${r < 3 ? ' class="tall"' : ""}><th${r === active.row ? ' class="sel"' : ""}>${r}</th>`;
  for (const c of columns) {
    const v = values[c + r];
    const on = c === active.col && r === active.row;
    html += v ? `<td class="num${on ? " active" : ""}">${v}</td>` : "<td></td>";
  }
  html += "</tr>";
}
document.getElementById("grid").innerHTML = html + "</tbody>";
```
